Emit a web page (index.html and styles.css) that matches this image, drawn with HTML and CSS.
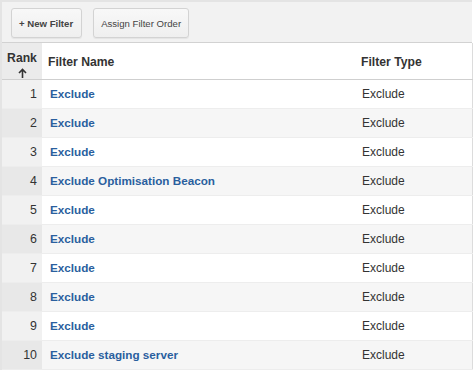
FILE: index.html
```html
<!DOCTYPE html>
<html>
<head>
<meta charset="utf-8">
<link rel="stylesheet" href="styles.css">
</head>
<body>
<div class="frame">
  <div class="toolbar">
    <button class="btn btn-bold">+ New Filter</button>
    <button class="btn">Assign Filter Order</button>
  </div>
  <table class="grid">
    <thead>
      <tr>
        <th class="rank-h"><span>Rank</span><svg class="arrow" width="9" height="10" viewBox="0 0 9 10"><path d="M4.5 1.5V10M1 5L4.5 1.5L8 5" fill="none" stroke="#333" stroke-width="1.6"/></svg></th>
        <th class="name-h">Filter Name</th>
        <th class="type-h">Filter Type</th>
      </tr>
    </thead>
    <tbody>
      <tr><td class="rank">1</td><td class="name"><a>Exclude</a></td><td class="type">Exclude</td></tr>
      <tr><td class="rank">2</td><td class="name"><a>Exclude</a></td><td class="type">Exclude</td></tr>
      <tr><td class="rank">3</td><td class="name"><a>Exclude</a></td><td class="type">Exclude</td></tr>
      <tr><td class="rank">4</td><td class="name"><a>Exclude Optimisation Beacon</a></td><td class="type">Exclude</td></tr>
      <tr><td class="rank">5</td><td class="name"><a>Exclude</a></td><td class="type">Exclude</td></tr>
      <tr><td class="rank">6</td><td class="name"><a>Exclude</a></td><td class="type">Exclude</td></tr>
      <tr><td class="rank">7</td><td class="name"><a>Exclude</a></td><td class="type">Exclude</td></tr>
      <tr><td class="rank">8</td><td class="name"><a>Exclude</a></td><td class="type">Exclude</td></tr>
      <tr><td class="rank">9</td><td class="name"><a>Exclude</a></td><td class="type">Exclude</td></tr>
      <tr><td class="rank">10</td><td class="name"><a>Exclude staging server</a></td><td class="type">Exclude</td></tr>
    </tbody>
  </table>
</div>
</body>
</html>
```
FILE: styles.css
```css
html, body {
  margin: 0;
  padding: 0;
  background: #fff;
}
body {
  font-family: "Liberation Sans", Arial, sans-serif;
  color: #333;
  width: 474px;
  height: 370px;
  overflow: hidden;
}
.frame {
  border-left: 2px solid #e4e4e4;
  border-top: 2px solid #e4e4e4;
  width: 470px;
}
.toolbar {
  background: #f2f2f2;
  height: 41px;
  border-bottom: 1px solid #d2d2d2;
  display: flex;
  align-items: center;
  gap: 11px;
  padding-left: 9px;
  padding-top: 2px;
  box-sizing: border-box;
}
.btn {
  font-family: "Liberation Sans", Arial, sans-serif;
  font-size: 9.6px;
  color: #444;
  height: 30px;
  padding: 0 7px;
  background: linear-gradient(#f8f8f8, #efefef);
  border: 1px solid #d3d3d3;
  border-radius: 3px;
  box-shadow: 0 1px 1px rgba(0,0,0,0.06);
}
.btn-bold {
  font-weight: bold;
  padding: 0 8px 0 7px;
}
.grid {
  border-collapse: collapse;
  width: 471px;
  table-layout: fixed;
  border-right: 1px solid #dcdcdc;
}
.grid th {
  height: 34px;
  font-size: 12.2px;
  font-weight: bold;
  text-align: left;
  background: #fff;
  border-bottom: 1px solid #cfcfcf;
  padding: 2px 0 0 0;
  color: #333;
}
.rank-h {
  width: 40px;
  background: #ebebeb !important;
  text-align: center !important;
  vertical-align: top;
  line-height: 14px;
}
.rank-h span {
  display: block;
  padding-top: 6px;
}
.arrow {
  display: block;
  margin: 3px auto 0;
}
.name-h {
  width: 307px;
  padding-left: 6px !important;
}
.type-h {
  padding-left: 6px !important;
}
.grid td {
  height: 28px;
  padding: 0;
  font-size: 12px;
  border-bottom: 1px solid #ededed;
}
.grid tbody tr:nth-child(odd) td { background: #fff; }
.grid tbody tr:nth-child(even) td { background: #f6f6f6; }
.grid tbody tr td.rank { background: #f1f1f1; }
.grid tbody tr:nth-child(even) td.rank { background: #e8e8e8; }
.rank {
  text-align: right;
  padding-right: 5px !important;
  color: #333;
  font-size: 12.4px !important;
}
.name {
  padding-left: 8px !important;
}
.name a {
  color: #2a5f9e;
  font-weight: bold;
  font-size: 11.7px;
  text-decoration: none;
}
.type {
  padding-left: 7px !important;
  color: #333;
}
```
